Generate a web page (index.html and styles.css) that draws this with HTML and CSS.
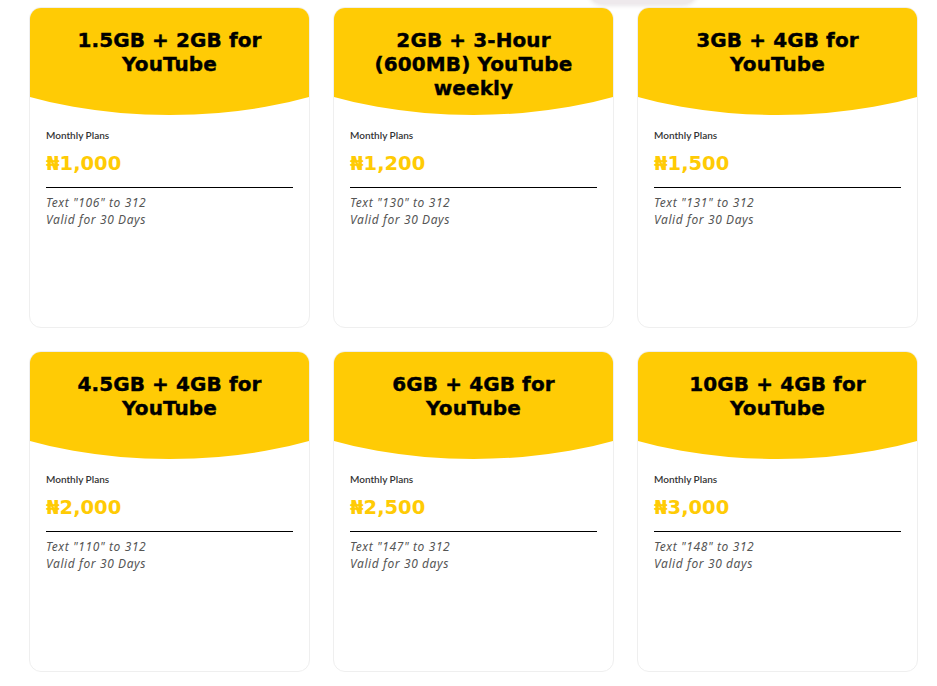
FILE: index.html
```html
<!DOCTYPE html>
<html lang="en">
<head>
<meta charset="utf-8">
<title>YouTube Bundles</title>
<link rel="stylesheet" href="styles.css">
</head>
<body>
<div class="top-tab"></div>
<main class="plans">
  <article class="card">
    <header class="card-head"><h2>1.5GB + 2GB for YouTube</h2></header>
    <div class="card-body">
      <p class="kind">Monthly Plans</p>
      <p class="price">₦1,000</p>
      <hr class="rule">
      <p class="note">Text "106" to 312<br>Valid for 30 Days</p>
    </div>
  </article>
  <article class="card">
    <header class="card-head"><h2>2GB + 3-Hour (600MB) YouTube weekly</h2></header>
    <div class="card-body">
      <p class="kind">Monthly Plans</p>
      <p class="price">₦1,200</p>
      <hr class="rule">
      <p class="note">Text "130" to 312<br>Valid for 30 Days</p>
    </div>
  </article>
  <article class="card">
    <header class="card-head"><h2>3GB + 4GB for YouTube</h2></header>
    <div class="card-body">
      <p class="kind">Monthly Plans</p>
      <p class="price">₦1,500</p>
      <hr class="rule">
      <p class="note">Text "131" to 312<br>Valid for 30 Days</p>
    </div>
  </article>
  <article class="card">
    <header class="card-head"><h2>4.5GB + 4GB for YouTube</h2></header>
    <div class="card-body">
      <p class="kind">Monthly Plans</p>
      <p class="price">₦2,000</p>
      <hr class="rule">
      <p class="note">Text "110" to 312<br>Valid for 30 Days</p>
    </div>
  </article>
  <article class="card">
    <header class="card-head"><h2>6GB + 4GB for YouTube</h2></header>
    <div class="card-body">
      <p class="kind">Monthly Plans</p>
      <p class="price">₦2,500</p>
      <hr class="rule">
      <p class="note">Text "147" to 312<br>Valid for 30 days</p>
    </div>
  </article>
  <article class="card">
    <header class="card-head"><h2>10GB + 4GB for YouTube</h2></header>
    <div class="card-body">
      <p class="kind">Monthly Plans</p>
      <p class="price">₦3,000</p>
      <hr class="rule">
      <p class="note">Text "148" to 312<br>Valid for 30 days</p>
    </div>
  </article>
</main>
</body>
</html>
```

FILE: styles.css
```css
* { box-sizing: border-box; }

html, body {
  margin: 0;
  padding: 0;
  background: #ffffff;
}

body {
  font-family: "Lato", "Noto Sans", "DejaVu Sans", sans-serif;
  color: #000;
  position: relative;
  overflow: hidden;
}

.top-tab {
  position: absolute;
  left: 590px;
  top: -22px;
  width: 106px;
  height: 26px;
  border-radius: 13px;
  background: #eee9ec;
  box-shadow: 0 0 4px 2px rgba(220, 214, 218, 0.6);
}

.plans {
  display: grid;
  grid-template-columns: repeat(3, 281px);
  grid-auto-rows: 321px;
  column-gap: 23px;
  row-gap: 23px;
  padding: 7px 0 0 29px;
}

.card {
  border: 1px solid #efefef;
  border-radius: 12px;
  overflow: hidden;
  background: #fff;
  display: flex;
  flex-direction: column;
}

.card-head {
  height: 107px;
  flex: none;
  background: #ffcb05;
  clip-path: ellipse(90% 107px at 50% 0);
  padding: 20px 24px 0;
  text-align: center;
}

.card-head h2 {
  margin: 0;
  font-family: "DejaVu Sans", "Noto Sans", sans-serif;
  font-size: 20px;
  line-height: 24px;
  font-weight: 700;
  letter-spacing: 0.1px;
  -webkit-text-stroke: 0.4px #000;
  color: #000;
}

.card-body {
  padding: 13px 16px 0;
}

.kind {
  margin: 0;
  font-size: 10px;
  line-height: 14px;
  font-weight: 600;
  color: #333;
}

.price {
  margin: 10px 0 0;
  font-family: "DejaVu Sans", "Noto Sans", sans-serif;
  font-size: 19.5px;
  line-height: 24px;
  font-weight: 700;
  color: #ffcb05;
}

.rule {
  margin: 11px 0 0;
  border: 0;
  border-top: 1px solid #000;
  height: 0;
}

.note {
  margin: 6px 0 0;
  font-family: "Noto Sans", "Open Sans", sans-serif;
  font-size: 12px;
  line-height: 17px;
  font-style: italic;
  font-weight: 400;
  letter-spacing: 0.6px;
  color: #555;
}
```
